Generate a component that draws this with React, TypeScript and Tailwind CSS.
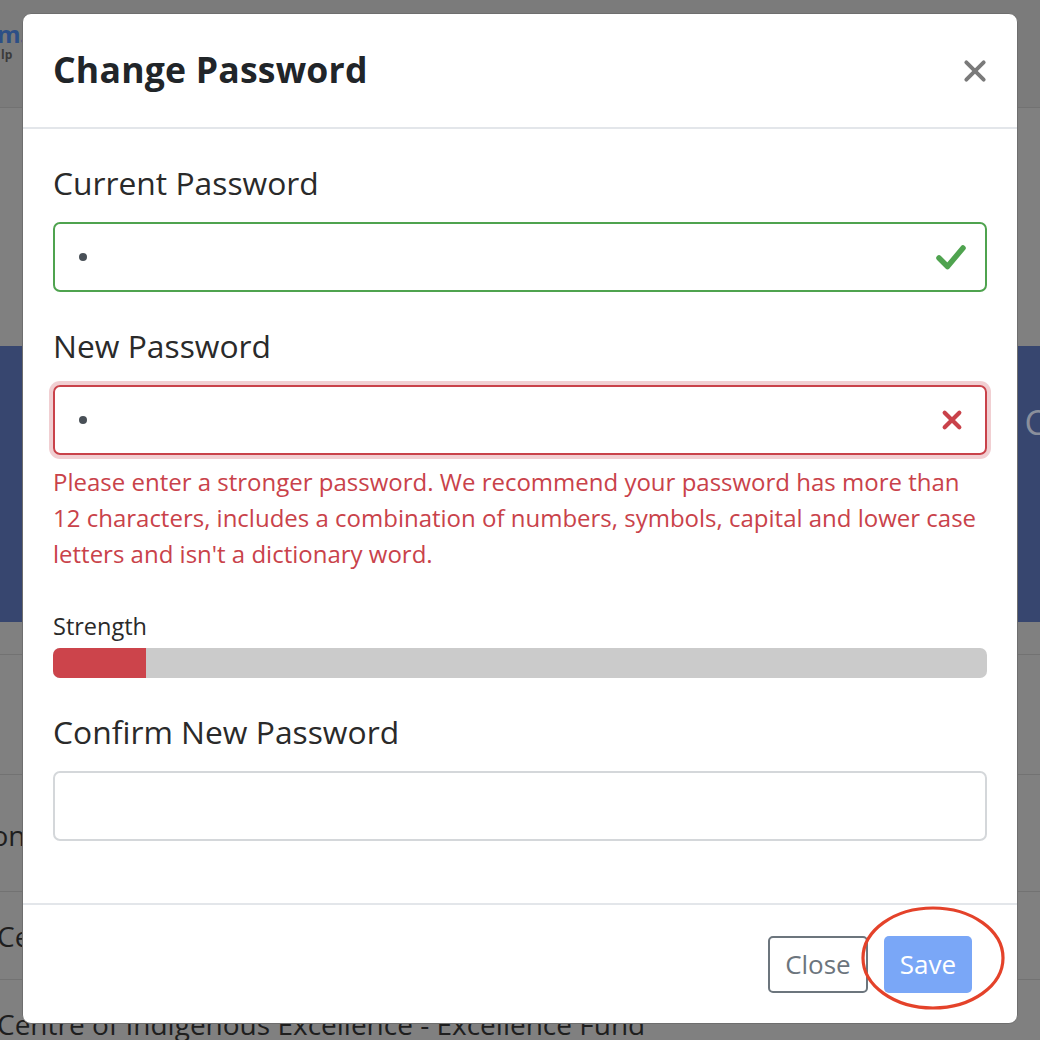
const errorText =
  "Please enter a stronger password. We recommend your password has more than 12 characters, includes a combination of numbers, symbols, capital and lower case letters and isn't a dictionary word.";

function CheckIcon() {
  return (
    <svg width="32" height="28" viewBox="0 0 32 28" fill="none">
      <path
        d="M4 15 L12.5 23.5 L28 5"
        stroke="#4fa34f"
        strokeWidth="5.5"
        strokeLinecap="round"
        strokeLinejoin="round"
      />
    </svg>
  );
}

function TimesIcon({ color, size, stroke }: { color: string; size: number; stroke: number }) {
  return (
    <svg width={size} height={size} viewBox="0 0 24 24" fill="none">
      <path
        d="M4 4 L20 20 M20 4 L4 20"
        stroke={color}
        strokeWidth={stroke}
        strokeLinecap="round"
      />
    </svg>
  );
}

function Dot() {
  return <div className="w-[8px] h-[8px] rounded-full bg-[#495057]" />;
}

function Backdrop() {
  return (
    <div className="flex flex-col font-['Open_Sans',sans-serif]">
      {/* top nav */}
      <div className="h-[108px] bg-[#7b7b7b] border-b border-[#727272] flex flex-col pt-[22px]">
        <span className="text-[#2d4f86] text-[24px] font-bold leading-[24px] ml-[-3px] tracking-[-0.5px]">m.</span>
        <span className="text-[#3a3a3a] text-[12px] font-bold leading-[14px] mt-[2px] ml-[1px]">lp</span>
      </div>
      <div className="h-[238px] bg-[#808080]" />
      {/* blue banner */}
      <div className="h-[276px] bg-[#37466f] flex justify-end pt-[56px]">
        <span className="text-[#8a8f9c] text-[34px] leading-[40px] mr-[-6px]">C</span>
      </div>
      <div className="h-[33px] bg-[#808080] border-b border-[#727272]" />
      <div className="h-[120px] bg-[#808080] border-b border-[#727272]" />
      <div className="h-[117px] bg-[#808080] border-b border-[#727272] flex items-center">
        <span className="text-[#1e1e1e] text-[28px] ml-[-124px] pt-[4px]">Foundation</span>
      </div>
      <div className="h-[88px] bg-[#808080] border-b border-[#727272] flex items-center">
        <span className="text-[#1e1e1e] text-[28px] ml-[-3px] whitespace-nowrap">Centre of Indigenous Excellence</span>
      </div>
      <div className="h-[60px] bg-[#808080] pt-[28px]">
        <span className="text-[#1e1e1e] text-[28px] leading-[32px] ml-[-3px] whitespace-nowrap">
          Centre of Indigenous Excellence - Excellence Fund
        </span>
      </div>
    </div>
  );
}

export default function App() {
  return (
    <div className="relative w-[1040px] h-[1040px] overflow-hidden bg-[#808080]">
      <Backdrop />

      {/* Modal */}
      <div className="absolute left-[22px] top-[13px] w-[996px] h-[1011px] bg-white rounded-[9px] border border-[#6e6e6e] flex flex-col font-['Open_Sans',sans-serif] text-[#212529]">
        {/* Header */}
        <div className="h-[115px] border-b-2 border-[#e3e6ea] flex items-center justify-between pl-[30px] pr-[29px]">
          <h2 className="text-[35.6px] font-bold leading-none tracking-[0.2px] pb-[2px]">Change Password</h2>
          <TimesIcon color="#7a7a7a" size={26} stroke={3.6} />
        </div>

        {/* Body */}
        <div className="flex-1 px-[30px] pt-[31px]">
          <label className="block text-[31.8px] leading-[45px] text-[#2a2a2a]">Current Password</label>
          <div className="mt-[17px] h-[70px] rounded-[7px] border-2 border-[#4fa34f] flex items-center justify-between pl-[24px] pr-[18px]">
            <Dot />
            <CheckIcon />
          </div>

          <label className="block mt-[31px] text-[31.8px] leading-[45px] text-[#2a2a2a]">New Password</label>
          <div className="mt-[17px] h-[70px] rounded-[7px] border-2 border-[#c9424a] ring-4 ring-[#f1cfd2] flex items-center justify-between pl-[24px] pr-[22px]">
            <Dot />
            <TimesIcon color="#c9424a" size={22} stroke={4.6} />
          </div>
          <p className="mt-[9px] text-[24px] leading-[36px] text-[#c9424a] pr-[6px]">{errorText}</p>

          <p className="mt-[38px] text-[23.5px] leading-[33px] text-[#2a2a2a]">Strength</p>
          <div className="mt-[5px] h-[30px] rounded-[7px] bg-[#cbcbcb] overflow-hidden flex">
            <div className="w-[93px] bg-[#cc444b]" />
          </div>

          <label className="block mt-[31px] text-[31.8px] leading-[45px] text-[#2a2a2a]">Confirm New Password</label>
          <div className="mt-[17px] h-[70px] rounded-[7px] border-2 border-[#d4d7da]" />
        </div>

        {/* Footer */}
        <div className="h-[120px] border-t-2 border-[#e3e6ea] flex items-center justify-end gap-[16px] pr-[45px] relative">
          <button className="h-[57px] px-[15px] rounded-[5px] border-2 border-[#6c757d] text-[#6c757d] text-[26px] leading-none">
            Close
          </button>
          <button className="h-[57px] px-[16px] rounded-[5px] bg-[#7aa7f7] text-white text-[26px] leading-none">
            Save
          </button>
          {/* annotation circle */}
          <svg className="absolute left-[837px] top-[0px] pointer-events-none" width="150" height="110" viewBox="0 0 150 110">
            <ellipse cx="73" cy="53" rx="70" ry="50" fill="none" stroke="#e4422a" strokeWidth="3.2" />
          </svg>
        </div>
      </div>
    </div>
  );
}
